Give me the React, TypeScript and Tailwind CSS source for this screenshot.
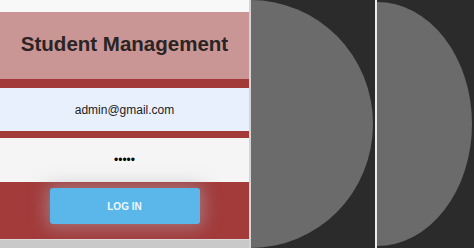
export default function App() {
  return (
    <div className="flex h-[248px] w-[474px] overflow-hidden bg-[#2b2b2b] font-['Liberation_Sans',Arial,sans-serif]">
      {/* login panel */}
      <div className="flex w-[249px] shrink-0 flex-col">
        <div className="h-[12px] bg-[#f8f8f8]" />
        <div className="flex h-[67px] items-center justify-center bg-[#c99595] pb-[3px]">
          <h1 className="text-[20.5px] font-bold text-[#2a2424]">Student Management</h1>
        </div>
        <div className="h-[9px] bg-[#a23a3a]" />
        <input
          readOnly
          value="admin@gmail.com"
          className="h-[43px] w-full bg-[#e8f0fe] text-center text-[12px] text-[#222] outline-none"
        />
        <div className="h-[7px] bg-[#a23a3a]" />
        <input
          readOnly
          type="password"
          value="admin"
          className="h-[44px] w-full bg-[#f5f5f5] text-center text-[12px] text-black outline-none"
        />
        <div className="flex h-[57px] justify-center bg-[#a33b3b] pt-[6px]">
          <button className="h-[36px] w-[150px] rounded-[3px] bg-[#5bb7ea] text-[10px] font-bold text-[#eef7fd] shadow-[0_0_16px_4px_rgba(170,170,180,0.5)]">
            LOG IN
          </button>
        </div>
        <div className="h-[9px] border-t border-[#dcdcdc] bg-[#c9c9c9]" />
      </div>
      <div className="w-[2px] shrink-0 bg-[#d4d4d4]" />

      {/* preview 1 */}
      <div className="w-[124px] shrink-0">
        <svg width="124" height="248" viewBox="0 0 124 248">
          <ellipse cx="0" cy="124" rx="122" ry="124" fill="#6b6b6b" />
        </svg>
      </div>
      <div className="w-[2px] shrink-0 bg-[#ececec]" />

      {/* preview 2 */}
      <div className="flex-1">
        <svg width="97" height="248" viewBox="0 0 97 248">
          <ellipse cx="0" cy="124" rx="95" ry="122" fill="#6b6b6b" />
        </svg>
      </div>
    </div>
  );
}
